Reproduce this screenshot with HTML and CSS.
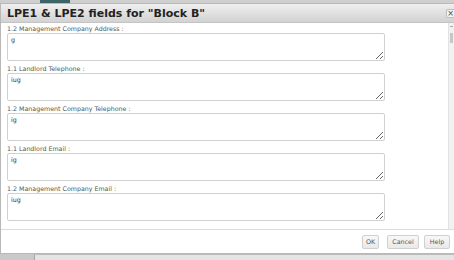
FILE: index.html
```html
<!DOCTYPE html>
<html>
<head>
<meta charset="utf-8">
<link rel="stylesheet" href="styles.css">
</head>
<body>
<div class="page-top"><span class="tab"></span></div>
<div class="dialog">
  <div class="titlebar">
    <span class="title">LPE1 &amp; LPE2 fields for "Block B"</span>
    <span class="close">×</span>
  </div>
  <div class="body">
    <div class="fields">
      <div class="field">
        <label class="lbl">1.2 Management Company Address :</label>
        <textarea class="ta">g</textarea>
      </div>
      <div class="field">
        <label class="lbl">1.1 Landlord Telephone :</label>
        <textarea class="ta">iug</textarea>
      </div>
      <div class="field">
        <label class="lbl">1.2 Management Company Telephone :</label>
        <textarea class="ta">ig</textarea>
      </div>
      <div class="field">
        <label class="lbl">1.1 Landlord Email :</label>
        <textarea class="ta">ig</textarea>
      </div>
      <div class="field">
        <label class="lbl">1.2 Management Company Email :</label>
        <textarea class="ta">iug</textarea>
      </div>
    </div>
    <div class="scrollbar"><div class="arrow"></div><div class="thumb"></div></div>
  </div>
  <div class="footer">
    <button class="btn btn-ok">OK</button>
    <button class="btn btn-cancel">Cancel</button>
    <button class="btn btn-help">Help</button>
  </div>
</div>
<div class="page-bottom"><span class="panel"></span></div>
</body>
</html>
```
FILE: styles.css
```css
html, body {
  margin: 0;
  padding: 0;
  width: 454px;
  height: 260px;
  overflow: hidden;
  background: #d3d3d3;
  font-family: "DejaVu Sans", Verdana, sans-serif;
}
.page-top {
  height: 3px;
  background: #cfcfcf;
  display: flex;
}
.tab {
  margin-left: 40px;
  width: 30px;
  background: #3d6466;
}
.dialog {
  width: 454px;
  height: 251px;
  background: #fff;
  border: 1px solid #b8b8b8;
  border-right: none;
  box-sizing: border-box;
  display: flex;
  flex-direction: column;
}
.titlebar {
  height: 18px;
  flex: none;
  display: flex;
  align-items: center;
  justify-content: space-between;
  background: linear-gradient(#efefef, #d2d2d2);
  border-bottom: 1px solid #c4c4c4;
}
.title {
  margin-left: 6px;
  font-size: 11px;
  font-weight: bold;
  color: #222;
}
.close {
  width: 8px;
  height: 9px;
  border: 1px solid #bdbdbd;
  border-right: none;
  border-radius: 2px 0 0 2px;
  background: #f4f4f4;
  font-size: 8px;
  line-height: 8px;
  color: #444;
  text-align: center;
  box-sizing: border-box;
}
.body {
  flex: none;
  height: 206px;
  display: flex;
  border-bottom: 1px solid #dcdcdc;
}
.fields {
  flex: 1;
  overflow: hidden;
  padding: 1px 0 0 6px;
}
.field {
  display: flex;
  flex-direction: column;
  margin-bottom: 2px;
}
.lbl {
  font-size: 6.3px;
  line-height: 9px;
  color: #555;
  margin-bottom: 0;
}
.ta {
  width: 378px;
  height: 28px;
  box-sizing: border-box;
  border: 1px solid #d0d0d0;
  border-radius: 2px;
  padding: 1px 3px;
  font-family: "DejaVu Sans", Verdana, sans-serif;
  font-size: 6.3px;
  line-height: 9px;
  color: #333;
  resize: vertical;
  margin: 0 0 1px 0;
}
.scrollbar {
  width: 5px;
  flex: none;
  background: #f1f1f1;
  border-left: 1px solid #e2e2e2;
  display: flex;
  flex-direction: column;
  align-items: flex-start;
}
.arrow {
  width: 3px;
  height: 4px;
  margin: 3px 0 0 1px;
  border-top: 1px solid #aaa;
  box-sizing: border-box;
}
.thumb {
  width: 3px;
  height: 10px;
  margin: 3px 0 0 1px;
  background: #c6c6c6;
}
.footer {
  flex: 1;
  display: flex;
  align-items: center;
  justify-content: flex-end;
  gap: 5px;
  padding-right: 4px;
}
.btn {
  height: 14px;
  box-sizing: border-box;
  border: 1px solid #d0d0d0;
  border-radius: 2px;
  background: linear-gradient(#f8f8f8, #e9e9e9);
  font-family: "DejaVu Sans", Verdana, sans-serif;
  font-size: 6.3px;
  color: #555;
  padding: 0;
  margin: 0;
}
.btn-ok { width: 17px; margin-right: 3px; }
.btn-cancel { width: 32px; }
.btn-help { width: 26px; }
.page-bottom {
  height: 6px;
  display: flex;
  background: #c9c9c9;
}
.panel {
  margin-left: 34px;
  flex: 1;
  background: #e4e4e4;
  border-top: 1px solid #bdbdbd;
  border-left: 1px solid #a8a8a8;
}
```
